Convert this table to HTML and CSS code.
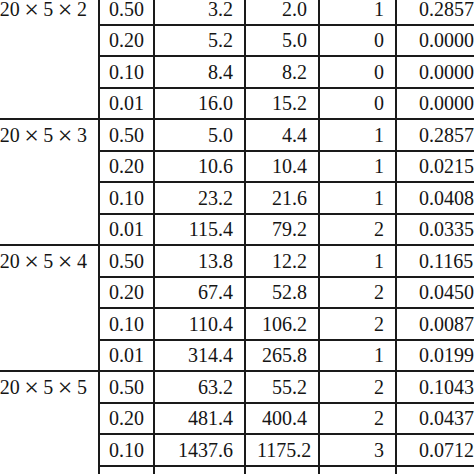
FILE: index.html
```html
<!DOCTYPE html>
<html>
<head>
<meta charset="utf-8">
<link rel="stylesheet" href="styles.css">
</head>
<body>
<table class="results">
  <colgroup>
    <col class="c-size"><col class="c-eps"><col class="c-a"><col class="c-b"><col class="c-n"><col class="c-r">
  </colgroup>
  <tbody>
    <tr><td class="size first">20<span class="op">×</span>5<span class="op">×</span>2</td><td class="eps">0.50</td><td>3.2</td><td>2.0</td><td>1</td><td class="ratio">0.2857</td></tr>
    <tr><td class="size"></td><td class="eps">0.20</td><td>5.2</td><td>5.0</td><td>0</td><td class="ratio">0.0000</td></tr>
    <tr><td class="size"></td><td class="eps">0.10</td><td>8.4</td><td>8.2</td><td>0</td><td class="ratio">0.0000</td></tr>
    <tr><td class="size"></td><td class="eps">0.01</td><td>16.0</td><td>15.2</td><td>0</td><td class="ratio">0.0000</td></tr>

    <tr><td class="size first">20<span class="op">×</span>5<span class="op">×</span>3</td><td class="eps">0.50</td><td>5.0</td><td>4.4</td><td>1</td><td class="ratio">0.2857</td></tr>
    <tr><td class="size"></td><td class="eps">0.20</td><td>10.6</td><td>10.4</td><td>1</td><td class="ratio">0.0215</td></tr>
    <tr><td class="size"></td><td class="eps">0.10</td><td>23.2</td><td>21.6</td><td>1</td><td class="ratio">0.0408</td></tr>
    <tr><td class="size"></td><td class="eps">0.01</td><td>115.4</td><td>79.2</td><td>2</td><td class="ratio">0.0335</td></tr>

    <tr><td class="size first">20<span class="op">×</span>5<span class="op">×</span>4</td><td class="eps">0.50</td><td>13.8</td><td>12.2</td><td>1</td><td class="ratio">0.1165</td></tr>
    <tr><td class="size"></td><td class="eps">0.20</td><td>67.4</td><td>52.8</td><td>2</td><td class="ratio">0.0450</td></tr>
    <tr><td class="size"></td><td class="eps">0.10</td><td>110.4</td><td>106.2</td><td>2</td><td class="ratio">0.0087</td></tr>
    <tr><td class="size"></td><td class="eps">0.01</td><td>314.4</td><td>265.8</td><td>1</td><td class="ratio">0.0199</td></tr>

    <tr><td class="size first">20<span class="op">×</span>5<span class="op">×</span>5</td><td class="eps">0.50</td><td>63.2</td><td>55.2</td><td>2</td><td class="ratio">0.1043</td></tr>
    <tr><td class="size"></td><td class="eps">0.20</td><td>481.4</td><td>400.4</td><td>2</td><td class="ratio">0.0437</td></tr>
    <tr><td class="size"></td><td class="eps">0.10</td><td>1437.6</td><td>1175.2</td><td>3</td><td class="ratio">0.0712</td></tr>
    <tr><td class="size"></td><td class="eps">0.01</td><td>&nbsp;</td><td>&nbsp;</td><td>&nbsp;</td><td class="ratio">&nbsp;</td></tr>
  </tbody>
</table>
</body>
</html>
```

FILE: styles.css
```css
html, body {
  margin: 0;
  padding: 0;
  background: #ffffff;
  overflow: hidden;
  width: 474px;
  height: 474px;
}

.results {
  border-collapse: collapse;
  table-layout: fixed;
  width: 566px;
  margin-top: -8px;
  margin-left: -6px;
  font-family: "Liberation Serif", "Times New Roman", serif;
  font-size: 20px;
  color: #151515;
}

.c-size { width: 105px; }
.c-eps { width: 55px; }
.c-a { width: 91px; }
.c-b { width: 74px; }
.c-n { width: 77px; }
.c-r { width: 164px; }

.results td {
  border: 2px solid #1a1a1a;
  height: 31.5px;
  padding: 0 11px;
  text-align: right;
  white-space: nowrap;
  line-height: 20px;
  box-sizing: border-box;
}

.results td.size {
  border: none;
  padding-left: 0;
  padding-right: 11px;
}

.results td.size.first {
  border-top: 2px solid #1a1a1a;
}

.results td.eps {
  text-align: center;
  padding: 0;
}

.results td.ratio {
  text-align: left;
  padding-left: 22px;
}

.op {
  font-size: 26px;
  line-height: 0;
  margin: 0 4.5px;
  vertical-align: -2px;
}
```
